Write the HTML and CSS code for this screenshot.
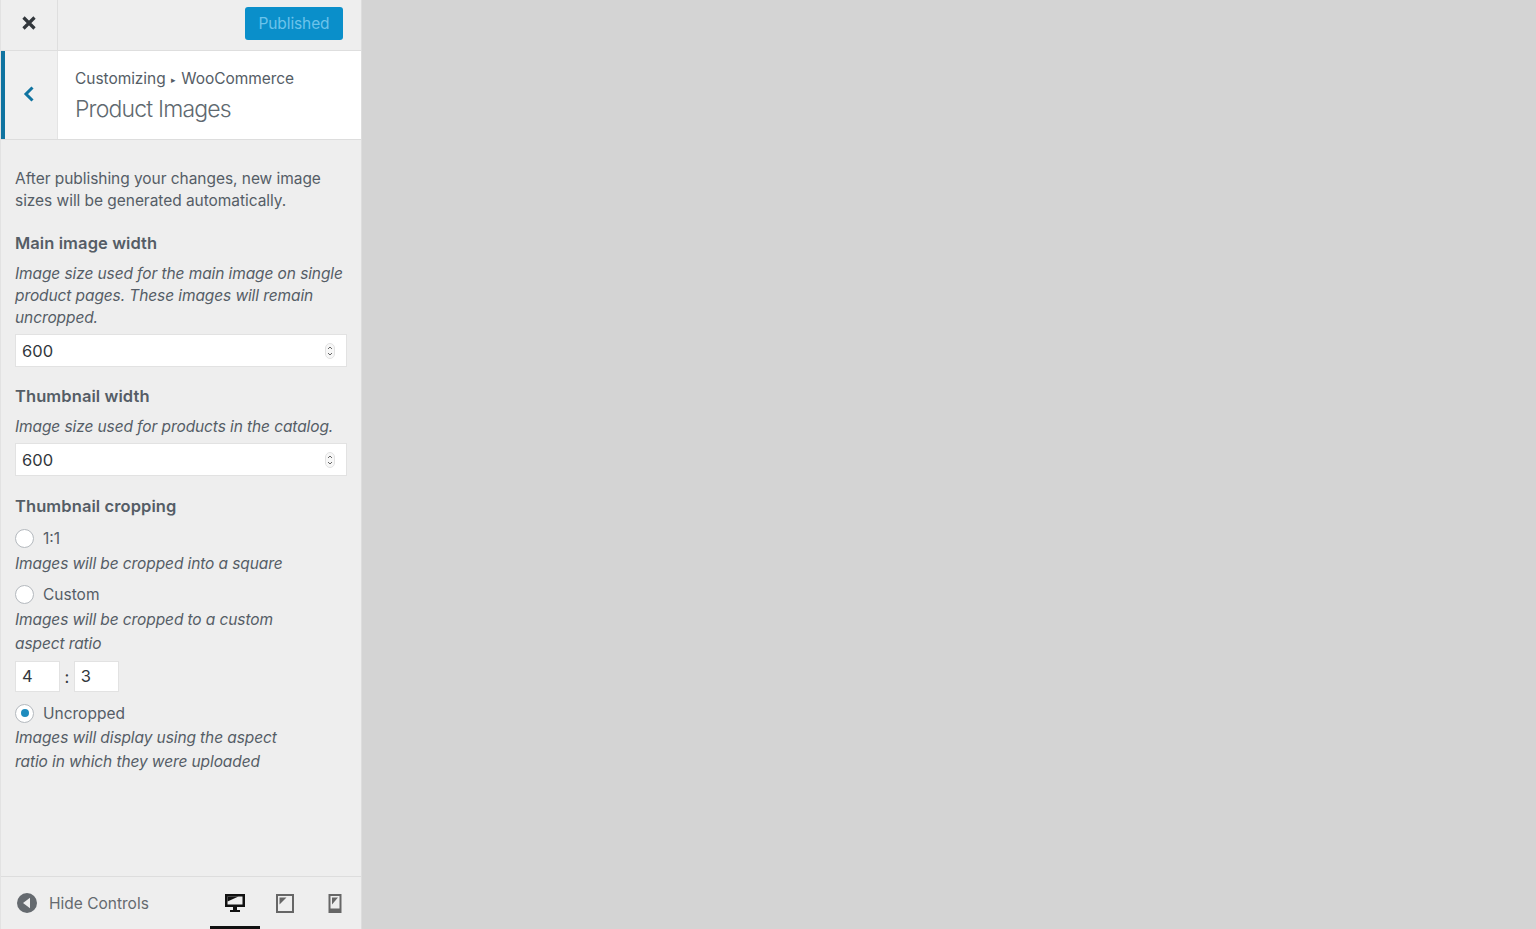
FILE: index.html
```html
<!DOCTYPE html>
<html lang="en">
<head>
<meta charset="utf-8">
<title>Customizing WooCommerce: Product Images</title>
<link rel="stylesheet" href="styles.css">
</head>
<body>
<aside class="sidebar">
  <header class="topbar">
    <button class="close" aria-label="Close">
      <svg width="16" height="16" viewBox="0 0 16 16"><path d="M2.5 2.5l11 11M13.500 2.500l-11 11" stroke="#32373c" stroke-width="3.200" fill="none"/></svg>
    </button>
    <button class="publish">Published</button>
  </header>
  <div class="section-head">
    <button class="back" aria-label="Back">
      <svg width="14" height="20" viewBox="0 0 14 20"><path d="M10.500 3.500L4 10l6.500 6.500" stroke="#0f73a0" stroke-width="3" fill="none"/></svg>
    </button>
    <div class="titles">
      <div class="crumb">Customizing <span class="arrow">▸</span> WooCommerce</div>
      <h1>Product Images</h1>
    </div>
  </div>
  <main class="controls">
    <p class="intro">After publishing your changes, new image sizes will be generated automatically.</p>
    <h2 class="first">Main image width</h2>
    <p class="desc">Image size used for the main image on single product pages. These images will remain uncropped.</p>
    <div class="field"><span>600</span><svg width="10" height="16" viewBox="0 0 10 16"><rect x=".5" y=".5" width="9" height="15" rx="4.500" fill="#f7f7f7" stroke="#e2e2e2"/><path d="M3 6l2-2 2 2M3 10l2 2 2-2" stroke="#666" fill="none"/></svg></div>
    <h2>Thumbnail width</h2>
    <p class="desc">Image size used for products in the catalog.</p>
    <div class="field"><span>600</span><svg width="10" height="16" viewBox="0 0 10 16"><rect x=".5" y=".5" width="9" height="15" rx="4.500" fill="#f7f7f7" stroke="#e2e2e2"/><path d="M3 6l2-2 2 2M3 10l2 2 2-2" stroke="#666" fill="none"/></svg></div>
    <h2 class="crop-title">Thumbnail cropping</h2>
    <div class="radio one"><i class="dot"></i><span>1:1</span></div>
    <p class="hint">Images will be cropped into a square</p>
    <div class="radio"><i class="dot"></i><span>Custom</span></div>
    <p class="hint">Images will be cropped to a custom<br>aspect ratio</p>
    <div class="ratio"><div class="mini">4</div><span>:</span><div class="mini">3</div></div>
    <div class="radio"><i class="dot on"></i><span>Uncropped</span></div>
    <p class="hint last">Images will display using the aspect<br>ratio in which they were uploaded</p>
  </main>
  <footer class="footer">
    <div class="hide">
      <svg width="20" height="20" viewBox="0 0 20 20"><circle cx="10" cy="10" r="10" fill="#656a6f"/><path d="M13 4.800v10.400L6 10z" fill="#eee"/></svg>
      <span>Hide Controls</span>
    </div>
    <div class="devices">
      <div class="device active">
        <svg width="22" height="20" viewBox="0 0 22 20"><path d="M1 1h20v13H1z" fill="#111"/><path d="M3.500 3.500h15v8h-15z" fill="#eee"/><path d="M3.500 3.500h11l-11 5z" fill="#111"/><path d="M9 14h4v3h3v2H6v-2h3z" fill="#111"/></svg>
      </div>
      <div class="device">
        <svg width="18" height="19" viewBox="0 0 18 19"><path d="M1 1h16v17H1z" fill="#eee" stroke="#666" stroke-width="2"/><path d="M3.500 3.500h7l-7 7z" fill="#666"/></svg>
      </div>
      <div class="device">
        <svg width="14" height="19" viewBox="0 0 14 19"><path d="M1.500 1h11v17h-11z" fill="#eee" stroke="#666" stroke-width="2"/><path d="M4 3.500h6l-6 7z" fill="#666"/><path d="M1 14.500h12V18H1z" fill="#666"/></svg>
      </div>
    </div>
  </footer>
</aside>
</body>
</html>
```
FILE: styles.css
```css
* { box-sizing: border-box; }
html, body { height: 100%; }
body {
  margin: 0;
  background: #d4d4d4;
  font-family: Inter, "Liberation Sans", sans-serif;
  color: #555d66;
  overflow: hidden;
}
button { border: 0; padding: 0; font: inherit; }
p, h1, h2 { margin: 0; }

.sidebar {
  width: 362px;
  height: 929px;
  display: flex;
  flex-direction: column;
  background: #eeeeee;
  border-left: 1px solid #e2e2e2;
  border-right: 1px solid #dddddd;
}

.topbar {
  height: 51px;
  display: flex;
  align-items: center;
  justify-content: space-between;
  border-bottom: 1px solid #dedede;
  padding-right: 18px;
}
.close {
  width: 57px;
  height: 50px;
  padding: 0 1px 4px 0;
  display: flex;
  align-items: center;
  justify-content: center;
  background: #eeeeee;
  border-right: 1px solid #dedede;
}
.publish {
  width: 98px;
  height: 33px;
  margin-top: -4px;
  background: #0a8fca;
  color: #6cc3ea;
  border-radius: 3px;
  font-size: 15.500px;
  letter-spacing: -.1px;
}

.section-head {
  height: 89px;
  display: flex;
  background: #ffffff;
  border-bottom: 1px solid #dddddd;
}
.back {
  width: 57px;
  display: flex;
  align-items: center;
  justify-content: center;
  padding: 0 5px 2px 0;
  background: #f0f0f0;
  border-left: 4px solid #0f73a0;
  border-right: 1px solid #e4e4e4;
}
.titles { padding: 16px 0 0 17px; }
.crumb {
  font-size: 15.500px;
  line-height: 24px;
  letter-spacing: -.05px;
  color: #555d66;
}
.arrow { font-size: 9px; vertical-align: 1px; margin: 0 1px; }
h1 {
  margin-top: 3px;
  font-size: 23px;
  line-height: 29px;
  font-weight: 300;
  letter-spacing: -.82px;
  color: #606970;
}

.controls {
  flex: 1;
  padding: 28px 15px 0 14px;
}
.intro, .desc, .hint {
  font-size: 15.500px;
  line-height: 22px;
  width: 332px;
}
.intro { letter-spacing: -.05px; }
.desc, .hint { font-style: italic; letter-spacing: -.1px; }
h2 {
  margin-top: 21px;
  font-size: 16.500px;
  line-height: 22px;
  font-weight: 600;
  letter-spacing: .09px;
}
h2.first { margin-top: 20px; }
.desc { margin-top: 9px; }
.field {
  width: 332px;
  height: 33px;
  margin-top: 5px;
  padding: 0 11px 0 6px;
  display: flex;
  align-items: center;
  justify-content: space-between;
  background: #ffffff;
  border: 1px solid #e2e2e2;
  font-size: 16.500px;
  color: #32373c;
}
.field + h2 { margin-top: 18px; }
.field + h2.crop-title { margin-top: 19px; }
.radio {
  height: 24px;
  margin-top: 6.500px;
  display: flex;
  align-items: center;
  gap: 9px;
  font-size: 15.500px;
}
.radio.one { margin-top: 9px; }
.dot {
  width: 19px;
  height: 19px;
  border-radius: 50%;
  background: #ffffff;
  border: 1px solid #b4b9be;
  display: flex;
  align-items: center;
  justify-content: center;
}
.dot.on::after {
  content: "";
  width: 8px;
  height: 8px;
  border-radius: 50%;
  background: #1e8cbe;
}
.hint { line-height: 24px; margin-top: 1.500px; }
.hint.last { margin-top: .5px; }
.ratio {
  display: flex;
  align-items: center;
  gap: 4.500px;
  margin-top: 5.500px;
  font-size: 16.500px;
  color: #32373c;
}
.mini {
  width: 45px;
  height: 31px;
  padding-left: 6px;
  line-height: 29px;
  background: #ffffff;
  border: 1px solid #e2e2e2;
}
.ratio + .radio { margin-top: 9px; }

.footer {
  height: 53px;
  display: flex;
  align-items: center;
  justify-content: space-between;
  border-top: 1px solid #dddddd;
}
.hide {
  display: flex;
  align-items: center;
  gap: 12px;
  padding-left: 16px;
  font-size: 15.500px;
  color: #656a6f;
  letter-spacing: 0;
}
.devices { display: flex; height: 100%; padding-right: 1px; }
.device {
  width: 50px;
  height: 52px;
  display: flex;
  align-items: center;
  justify-content: center;
  border-bottom: 3px solid transparent;
  padding-top: 3px;
}
.device.active { border-bottom-color: #111111; }
```
